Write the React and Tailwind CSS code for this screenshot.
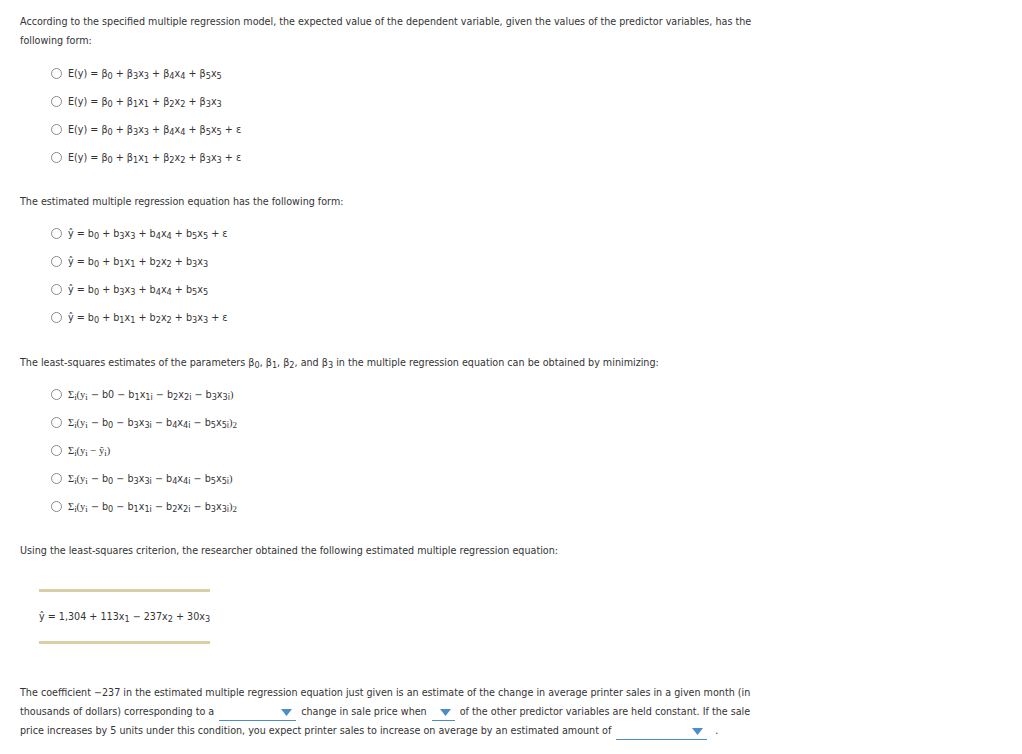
import React from 'react';

const serif = "font-['Liberation_Serif','DejaVu_Serif',serif] text-[10.5px]";

// small radio circle used for every choice
function Radio() {
  return <span className="inline-block w-[11px] h-[11px] rounded-full border border-[#8a8a8a] bg-white mr-[6px] shrink-0" />;
}

function Option({ children }) {
  return (
    <div className="flex items-center h-[28px] pl-[31px]">
      <Radio />
      <span className="whitespace-nowrap">{children}</span>
    </div>
  );
}

function Sub({ children }) {
  return <sub className="text-[85%] bottom-[-0.3em]">{children}</sub>;
}

const B = ({ n }) => <>β<Sub>{n}</Sub></>;
const Bx = ({ n }) => <>β<Sub>{n}</Sub>x<Sub>{n}</Sub></>;
const Lb = ({ n }) => <>b<Sub>{n}</Sub></>;
const Lbx = ({ n }) => <>b<Sub>{n}</Sub>x<Sub>{n}</Sub></>;
const Sx = ({ n }) => <>b<Sub>{n}</Sub>x<Sub>{n}i</Sub></>;

function Dropdown({ w }) {
  return (
    <span className={`inline-flex items-center justify-end align-bottom h-[17px] border-b border-[#4a8dc9] mx-[5px] pr-[4px] ${w}`}>
      <svg width="11" height="7" viewBox="0 0 11 7">
        <path d="M0 0 L11 0 L5.5 7 Z" fill="#4a8dc9" />
      </svg>
    </span>
  );
}

export default function App() {
  return (
    <div className="bg-white min-h-[754px] w-[1022px] text-[#333] text-[9.6px] leading-[19px] font-['DejaVu_Sans','Verdana',sans-serif] pl-[20px] pt-[12px]">
      <p className="w-[745px]">
        According to the specified multiple regression model, the expected value of the dependent variable, given the values of the predictor variables, has the following form:
      </p>

      <div className="mt-[9px]">
        <Option>E(y) = <B n="0" /> + <Bx n="3" /> + <Bx n="4" /> + <Bx n="5" /></Option>
        <Option>E(y) = <B n="0" /> + <Bx n="1" /> + <Bx n="2" /> + <Bx n="3" /></Option>
        <Option>E(y) = <B n="0" /> + <Bx n="3" /> + <Bx n="4" /> + <Bx n="5" /> + ε</Option>
        <Option>E(y) = <B n="0" /> + <Bx n="1" /> + <Bx n="2" /> + <Bx n="3" /> + ε</Option>
      </div>

      <p className="mt-[21px]">The estimated multiple regression equation has the following form:</p>

      <div className="mt-[8px]">
        <Option>ŷ = <Lb n="0" /> + <Lbx n="3" /> + <Lbx n="4" /> + <Lbx n="5" /> + ε</Option>
        <Option>ŷ = <Lb n="0" /> + <Lbx n="1" /> + <Lbx n="2" /> + <Lbx n="3" /></Option>
        <Option>ŷ = <Lb n="0" /> + <Lbx n="3" /> + <Lbx n="4" /> + <Lbx n="5" /></Option>
        <Option>ŷ = <Lb n="0" /> + <Lbx n="1" /> + <Lbx n="2" /> + <Lbx n="3" /> + ε</Option>
      </div>

      <p className="mt-[22px]">
        The least-squares estimates of the parameters <B n="0" />, <B n="1" />, <B n="2" />, and <B n="3" /> in the multiple regression equation can be obtained by minimizing:
      </p>

      <div className="mt-[8px]">
        <Option><span className={serif}>Σ<Sub>i</Sub>(y<Sub>i</Sub></span> − b0 − <Sx n="1" /> − <Sx n="2" /> − <Sx n="3" /><span className={serif}>)</span></Option>
        <Option><span className={serif}>Σ<Sub>i</Sub>(y<Sub>i</Sub></span> − <Lb n="0" /> − <Sx n="3" /> − <Sx n="4" /> − <Sx n="5" /><span className={serif}>)<Sub>2</Sub></span></Option>
        <Option><span className={serif}>Σ<Sub>i</Sub>(y<Sub>i</Sub> − ŷ<Sub>i</Sub>)</span></Option>
        <Option><span className={serif}>Σ<Sub>i</Sub>(y<Sub>i</Sub></span> − <Lb n="0" /> − <Sx n="3" /> − <Sx n="4" /> − <Sx n="5" /><span className={serif}>)</span></Option>
        <Option><span className={serif}>Σ<Sub>i</Sub>(y<Sub>i</Sub></span> − <Lb n="0" /> − <Sx n="1" /> − <Sx n="2" /> − <Sx n="3" /><span className={serif}>)<Sub>2</Sub></span></Option>
      </div>

      <p className="mt-[21px]">Using the least-squares criterion, the researcher obtained the following estimated multiple regression equation:</p>

      <div className="ml-[19px] w-[171px] mt-[29px]">
        <div className="h-[3px] bg-[#d9cfa6]" />
        <div className="pt-[15px] pb-[14px] leading-[20px] whitespace-nowrap">
          ŷ = 1,304 + 113x<Sub>1</Sub> − 237x<Sub>2</Sub> + 30x<Sub>3</Sub>
        </div>
        <div className="h-[3px] bg-[#d9cfa6]" />
      </div>

      <p className="w-[745px] mt-[39px]">
        The coefficient −237 in the estimated multiple regression equation just given is an estimate of the change in average printer sales in a given month (in thousands of dollars) corresponding to a
        <Dropdown w="w-[77px]" />
        change in sale price when
        <Dropdown w="w-[23px]" />
        of the other predictor variables are held constant. If the sale price increases by 5 units under this condition, you expect printer sales to increase on average by an estimated amount of
        <Dropdown w="w-[91px]" />
        {' '}.
      </p>
    </div>
  );
}
